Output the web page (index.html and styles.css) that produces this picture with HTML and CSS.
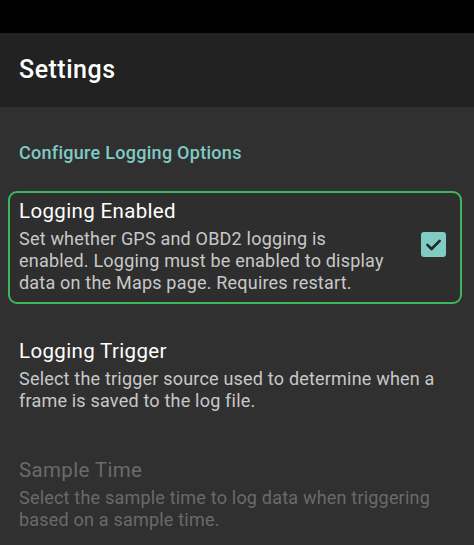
FILE: index.html
```html
<!DOCTYPE html>
<html lang="en">
<head>
<meta charset="utf-8">
<title>Settings</title>
<link rel="stylesheet" href="styles.css">
</head>
<body>
<div class="statusbar"></div>
<header class="toolbar"><h1 class="toolbar-title">Settings</h1></header>
<main class="content">
  <h2 class="category">Configure Logging Options</h2>
  <div class="pref pref-focused">
    <div class="pref-text">
      <div class="pref-title">Logging Enabled</div>
      <div class="pref-summary">Set whether GPS and OBD2 logging is enabled. Logging must be enabled to display data on the Maps page. Requires restart.</div>
    </div>
    <div class="checkbox" role="checkbox" aria-checked="true">
      <svg viewBox="0 0 24 24" width="25" height="25"><path d="M6.2 12.4l3.9 3.9 7.8-7.8" fill="none" stroke="#1d2b29" stroke-width="2.6" stroke-linecap="round" stroke-linejoin="round"/></svg>
    </div>
  </div>
  <div class="pref pref-trigger">
    <div class="pref-text">
      <div class="pref-title">Logging Trigger</div>
      <div class="pref-summary">Select the trigger source used to determine when a frame is saved to the log file.</div>
    </div>
  </div>
  <div class="pref pref-disabled">
    <div class="pref-text">
      <div class="pref-title">Sample Time</div>
      <div class="pref-summary">Select the sample time to log data when triggering based on a sample time.</div>
    </div>
  </div>
</main>
</body>
</html>
```
FILE: styles.css
```css
html, body {
  margin: 0;
  padding: 0;
  background: #303030;
  font-family: Roboto, "Noto Sans", sans-serif;
  height: 545px;
  overflow: hidden;
}
.statusbar {
  height: 33px;
  background: #000;
}
.toolbar {
  height: 74px;
  box-sizing: border-box;
  background: #222222;
  padding: 22px 19px 0;
}
.toolbar-title {
  margin: 0;
  font-size: 25px;
  line-height: 30px;
  font-weight: 500;
  letter-spacing: 0.5px;
  color: #ffffff;
}
.content {
  padding-top: 35px;
}
.category {
  margin: 0 19px 27px;
  font-size: 18px;
  line-height: 22px;
  font-weight: 500;
  letter-spacing: 0.28px;
  color: #80cbc4;
}
.pref {
  display: flex;
  align-items: center;
  padding: 0 19px;
}
.pref-text {
  flex: 1;
  min-width: 0;
}
.pref-title {
  font-size: 20.5px;
  line-height: 24px;
  letter-spacing: 0.35px;
  color: #ffffff;
}
.pref-summary {
  margin-top: 5px;
  font-size: 18px;
  line-height: 22px;
  letter-spacing: 0.2px;
  color: #c8c8c8;
}
.pref-focused {
  margin: 0 12px 0 8px;
  padding: 6px 14px 8px 9px;
  border: 2px solid #3fb65b;
  border-radius: 9px;
  background: #2e2e2e;
}
.pref-focused .pref-text {
  padding-right: 28px;
}
.checkbox {
  width: 25px;
  height: 25px;
  border-radius: 3px;
  background: #80cbc4;
  display: flex;
  align-items: center;
  justify-content: center;
  margin-top: -5px;
}
.checkbox svg {
  display: block;
}
.pref-trigger {
  padding-top: 35px;
}
.pref-disabled {
  padding-top: 46px;
}
.pref-disabled .pref-title,
.pref-disabled .pref-summary {
  color: #6a6a6a;
}
```
